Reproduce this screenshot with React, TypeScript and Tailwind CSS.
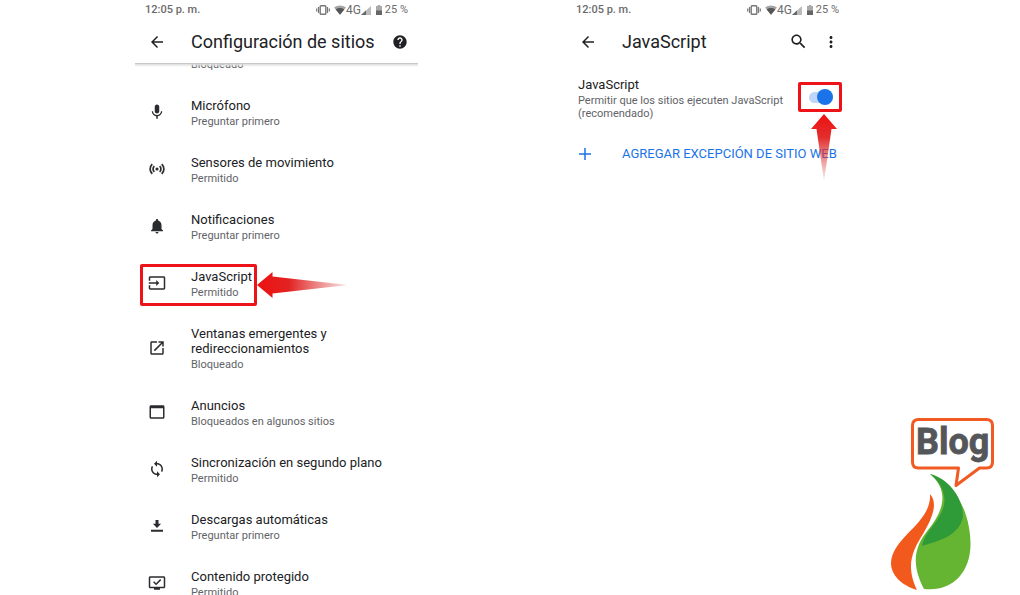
import type { ReactNode } from "react";

type IconProps = { children: ReactNode; className?: string };

function Icon({ children, className = "size-5" }: IconProps) {
  return (
    <svg viewBox="0 0 24 24" fill="currentColor" aria-hidden="true" className={`${className} shrink-0`}>
      {children}
    </svg>
  );
}

const micIcon = (
  <path d="M12 14c1.66 0 2.99-1.34 2.99-3L15 5c0-1.66-1.34-3-3-3S9 3.34 9 5v6c0 1.66 1.34 3 3 3zm5.3-3c0 3-2.54 5.1-5.3 5.1S6.7 14 6.7 11H5c0 3.41 2.72 6.23 6 6.72V21h2v-3.28c3.28-.48 6-3.3 6-6.72h-1.7z" />
);
const sensorsIcon = (
  <g fill="none" stroke="currentColor" strokeWidth="2.3">
    <circle cx="12" cy="12" r="2.1" fill="currentColor" stroke="none" />
    <path d="M8.5 8.2a5 5 0 0 0 0 7.6M15.5 8.2a5 5 0 0 1 0 7.6M5.7 5.4a9 9 0 0 0 0 13.2M18.3 5.4a9 9 0 0 1 0 13.2" />
  </g>
);
const bellIcon = (
  <path d="M12 22c1.1 0 2-.9 2-2h-4c0 1.1.89 2 2 2zm6-6v-5c0-3.07-1.64-5.64-4.5-6.32V4c0-.83-.67-1.5-1.5-1.5s-1.5.67-1.5 1.5v.68C7.63 5.36 6 7.92 6 11v5l-2 2v1h16v-1l-2-2z" />
);
const inputIcon = (
  <path d="M21 3.01H3c-1.1 0-2 .9-2 2V9h2V4.99h18v14.03H3V15H1v4.01c0 1.1.9 1.98 2 1.98h18c1.1 0 2-.88 2-1.98v-14c0-1.11-.9-2-2-2zM11 16l4-4-4-4v3H1v2h10v3z" />
);
const openIcon = (
  <path d="M19 19H5V5h7V3H5c-1.11 0-2 .9-2 2v14c0 1.1.89 2 2 2h14c1.1 0 2-.9 2-2v-7h-2v7zM14 3v2h3.59l-9.83 9.83 1.41 1.41L19 6.41V10h2V3h-7z" />
);
const windowIcon = (
  <path d="M20 3H4c-1.110 0-2 .9-2 2v14c0 1.100.890 2 2 2h16c1.100 0 2-.9 2-2V5c0-1.100-.890-2-2-2zm0 16H4V7h16v12z" />
);
const syncIcon = (
  <path d="M12 4V1L8 5l4 4V6c3.31 0 6 2.69 6 6 0 1.01-.25 1.97-.7 2.8l1.46 1.46C19.54 15.03 20 13.57 20 12c0-4.42-3.58-8-8-8zm0 14c-3.31 0-6-2.69-6-6 0-1.01.25-1.97.7-2.8L5.24 7.74C4.46 8.97 4 10.43 4 12c0 4.42 3.58 8 8 8v3l4-4-4-4v3z" />
);
const downloadIcon = <path d="M10 4h4v5h3.500L12 14.500 6.500 9H10V4zM4 17h16v2.500H4z" />;
const protectedIcon = (
  <path d="M21 3H3c-1.11 0-2 .89-2 2v12c0 1.1.89 2 2 2h5v2h8v-2h5c1.1 0 1.99-.9 1.99-2L23 5c0-1.11-.9-2-2-2zm0 14H3V5h18v12zM17.6 8.2l-1.4-1.4-5.4 5.4-2.6-2.6L6.8 11l4 4z" />
);

type Setting = { title: string; state: string; icon: ReactNode; marked?: boolean };

const settings: Setting[] = [
  { title: "Micrófono", state: "Preguntar primero", icon: micIcon },
  { title: "Sensores de movimiento", state: "Permitido", icon: sensorsIcon },
  { title: "Notificaciones", state: "Preguntar primero", icon: bellIcon },
  { title: "JavaScript", state: "Permitido", icon: inputIcon, marked: true },
  { title: "Ventanas emergentes y redireccionamientos", state: "Bloqueado", icon: openIcon },
  { title: "Anuncios", state: "Bloqueados en algunos sitios", icon: windowIcon },
  { title: "Sincronización en segundo plano", state: "Permitido", icon: syncIcon },
  { title: "Descargas automáticas", state: "Preguntar primero", icon: downloadIcon },
  { title: "Contenido protegido", state: "Permitido", icon: protectedIcon },
];

function StatusBar() {
  return (
    <div className="flex h-5 items-center justify-between px-[10px] text-[11px] text-[#6b6b6b]">
      <span className="font-medium">12:05 p. m.</span>
      <div className="flex items-center">
        <svg viewBox="0 0 14 10" className="mr-1 h-[10px] w-[14px]" fill="none" stroke="#777" aria-hidden="true">
          <rect x="4.2" y="0.8" width="5.6" height="8.4" rx="0.8" strokeWidth="1.4" />
          <path d="M2.5 2v6M11.5 2v6M.7 3.6v2.8M13.3 3.6v2.8" strokeWidth="1.2" />
        </svg>
        <svg viewBox="0 0 12 10" className="h-[10px] w-3" aria-hidden="true">
          <path d="M0 2.4C3.5-.3 8.5-.3 12 2.4L6 9.8z" fill="#a5a5a5" />
          <path d="M1.7 4.4c2.6-1.8 6-1.8 8.6 0L6 9.8z" fill="#555" />
        </svg>
        <span className="text-xs">4G</span>
        <svg viewBox="0 0 10 9" className="mr-1 h-[9px] w-[10px]" aria-hidden="true">
          <path d="M10 0v9H0z" fill="#bbb" />
          <path d="M5 4.5V9H0z" fill="#666" />
        </svg>
        <svg viewBox="0 0 8 10" className="mr-[2px] h-[10px] w-2" aria-hidden="true">
          <path d="M2.7 0h2.6v1H7v5H1V1h1.7z" fill="#aaa" />
          <path d="M1 5.5h6V10H1z" fill="#666" />
        </svg>
        <span>25 %</span>
      </div>
    </div>
  );
}

function AppBar({ title, children, raised }: { title: string; children: ReactNode; raised?: boolean }) {
  return (
    <header className="relative z-10 flex h-[43px] items-center bg-white pl-3 pr-2 text-[#202124]">
      <button type="button" aria-label="Atrás" className="flex size-5 items-center justify-center">
        <Icon className="size-[18px]">
          <path d="M20 11H7.83l5.59-5.59L12 4l-8 8 8 8 1.41-1.41L7.83 13H20v-2z" />
        </Icon>
      </button>
      <h1 className="ml-6 flex-1 whitespace-nowrap text-lg leading-6">{title}</h1>
      {children}
      {raised && (
        <span className="absolute inset-x-0 top-full h-1 border-t border-[#c9c9c9] bg-linear-to-b from-[#dddddd] to-transparent" />
      )}
    </header>
  );
}

function SettingRow({ title, state, icon, marked }: Setting) {
  return (
    <li className="relative">
      <a href="#" className="flex items-center gap-6 pb-3 pl-3 pt-[13px]">
        <span className="pb-1 text-[#2b2c2f]">
          <Icon className="mx-px size-[18px]">{icon}</Icon>
        </span>
        <span className="flex w-48 flex-col">
          <span className="text-[13px] leading-[15px] text-[#202124]">{title}</span>
          <span className="text-[11px] leading-[17px] text-[#5f6368]">{state}</span>
        </span>
      </a>
      {marked && (
        <>
          <span className="absolute left-[5px] top-2 h-[42px] w-[117px] rounded-xs border-3 border-[#ee1318]" />
          <svg viewBox="0 0 92 28" className="absolute left-[121px] top-[15px] h-7 w-23" aria-hidden="true">
            <defs>
              <linearGradient id="fadeRight" x1="0" x2="1" y1="0" y2="0">
                <stop offset="0" stopColor="#ee1111" />
                <stop offset="0.35" stopColor="#e22222" />
                <stop offset="1" stopColor="#dd4444" stopOpacity="0.15" />
              </linearGradient>
            </defs>
            <path d="M1 14 16.500 1v4.500L92 14l-75.500 8.500V27z" fill="url(#fadeRight)" />
          </svg>
        </>
      )}
    </li>
  );
}

function BlogLogo() {
  return (
    <svg viewBox="0 0 108 176" className="h-44 w-27" role="img" aria-label="Blog">
      <path
        d="M29.500 2.500h68q6 0 6 6v36.500q0 6-6 6h-7L67 68.500 69.500 51h-40q-6 0-6-6V8.500q0-6 6-6z"
        fill="#fff"
        stroke="#f15a22"
        strokeWidth="3"
        strokeLinejoin="round"
      />
      <text
        x="27"
        y="37"
        fontSize="36"
        fontWeight="700"
        fill="#55565a"
        stroke="#55565a"
        strokeWidth="0.8"
        fontFamily="Roboto, sans-serif"
      >
        Blog
      </text>
      <path
        d="M41 57C67 64 82 99 81.500 128C81 156 63 175 35 172C20 143 28 127 39 113C53 96 62 75 41 57z"
        fill="#65b432"
      />
      <path d="M41 57C63 63 74 84 74 99C71 119 49 124 33 129C36 112 55 103 55.500 83C55 71 49 63 41 57z" fill="#2e9b38" />
      <path d="M41 77C50 87 42 103 34 117C24 133 16 148 28 173C12 168 2 158 2 146C3 120 43 106 41 77z" fill="#f15a1c" />
    </svg>
  );
}

export default function App() {
  return (
    <main className="flex h-screen overflow-hidden bg-white pl-[135px] font-['Roboto','Liberation_Sans',sans-serif]">
      <section className="w-[283px] shrink-0">
        <StatusBar />
        <AppBar title="Configuración de sitios" raised>
          <button type="button" aria-label="Ayuda" className="flex size-5 items-center justify-center">
            <Icon className="size-4">
              <path d="M12 2C6.48 2 2 6.48 2 12s4.480 10 10 10 10-4.480 10-10S17.520 2 12 2zm1 17h-2v-2h2v2zm2.070-7.750l-.9.920C13.450 12.900 13 13.500 13 15h-2v-.5c0-1.100.450-2.100 1.170-2.830l1.240-1.260c.370-.360.590-.860.590-1.410 0-1.100-.9-2-2-2s-2 .9-2 2H8c0-2.210 1.790-4 4-4s4 1.790 4 4c0 .880-.360 1.680-.930 2.250z" />
            </Icon>
          </button>
        </AppBar>
        <p className="-mt-[6px] pb-3 pl-14 text-[11px] leading-4 text-[#5f6368]">Bloqueado</p>
        <ul>
          {settings.map((setting) => (
            <SettingRow key={setting.title} {...setting} />
          ))}
        </ul>
      </section>

      <section className="ml-37 w-[283px] shrink-0">
        <StatusBar />
        <AppBar title="JavaScript">
          <button type="button" aria-label="Buscar" className="mr-[13px] flex size-5 items-center justify-center">
            <Icon className="size-[19px]">
              <path d="M15.500 14h-.790l-.280-.270C15.410 12.590 16 11.110 16 9.500 16 5.910 13.090 3 9.500 3S3 5.910 3 9.500 5.910 16 9.500 16c1.610 0 3.090-.590 4.230-1.570l.270.280v.790l5 4.990L20.490 19l-4.990-5zm-6 0C7.010 14 5 11.990 5 9.500S7.010 5 9.500 5 14 7.010 14 9.500 11.990 14 9.500 14z" />
            </Icon>
          </button>
          <button type="button" aria-label="Más opciones" className="flex size-5 items-center justify-center">
            <Icon className="size-[18px]">
              <path d="M12 8c1.100 0 2-.9 2-2s-.9-2-2-2-2 .9-2 2 .9 2 2 2zm0 2c-1.100 0-2 .9-2 2s.9 2 2 2 2-.9 2-2-.9-2-2-2zm0 6c-1.100 0-2 .9-2 2s.9 2 2 2 2-.9 2-2-.9-2-2-2z" />
            </Icon>
          </button>
        </AppBar>
        <div className="flex items-start justify-between pl-3 pr-[7px] pt-3">
          <label htmlFor="js-switch" className="flex flex-col">
            <span className="text-[13px] leading-[19px] text-[#202124]">JavaScript</span>
            <span className="w-53 text-[11px] leading-[13px] text-[#5f6368]">
              Permitir que los sitios ejecuten JavaScript (recomendado)
            </span>
          </label>
          <div className="relative mt-[7px] flex h-[30px] w-11 shrink-0 items-center justify-center rounded-xs border-3 border-[#ee1318] pl-px">
            <input
              id="js-switch"
              type="checkbox"
              role="switch"
              defaultChecked
              className="peer absolute inset-0 z-10 cursor-pointer appearance-none"
            />
            <span className="flex h-[11px] w-6 items-center rounded-full bg-[#c0d6f8] peer-checked:justify-end">
              <span className="size-4 shrink-0 rounded-full bg-[#1a73e8]" />
            </span>
            <svg viewBox="0 0 28 68" className="absolute left-[9px] top-7 h-17 w-7" aria-hidden="true">
              <defs>
                <linearGradient id="fadeDown" x1="0" x2="0" y1="0" y2="1">
                  <stop offset="0" stopColor="#ee1111" />
                  <stop offset="0.35" stopColor="#e22222" stopOpacity="0.95" />
                  <stop offset="1" stopColor="#dd4444" stopOpacity="0.1" />
                </linearGradient>
              </defs>
              <path d="M14 1 27 16h-5.500L14 68 6.500 16H1z" fill="url(#fadeDown)" />
            </svg>
          </div>
        </div>
        <button type="button" className="mt-6 flex items-center whitespace-nowrap pl-[10px] text-[#1a73e8]">
          <Icon className="size-[18px]">
            <path d="M20 13h-7v7h-2v-7H4v-2h7V4h2v7h7v2z" />
          </Icon>
          <span className="ml-7 text-[13px] leading-5">AGREGAR EXCEPCIÓN DE SITIO WEB</span>
        </button>
      </section>

      <aside className="ml-auto self-end pb-[2px] pr-[23px]">
        <BlogLogo />
      </aside>
    </main>
  );
}
